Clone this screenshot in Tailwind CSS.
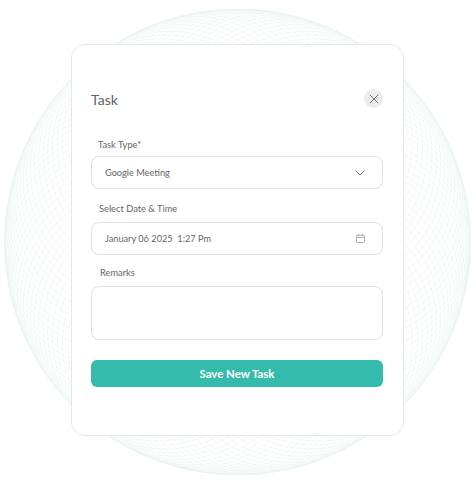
<!DOCTYPE html>
<html lang="en">
<head>
  <meta charset="UTF-8" />
  <title>Task</title>
  <script src="https://cdn.jsdelivr.net/npm/@tailwindcss/browser@4"></script>
</head>
<body class="bg-white w-[474px] h-[482px] overflow-hidden relative font-['Lato','Noto_Sans',sans-serif]">

<!-- guilloche ring behind the card -->
<svg id="rings" class="absolute left-[4px] top-[9px]" width="467" height="466" viewBox="0 0 467 466" fill="none" stroke="#d8ebe6" stroke-width="0.3"></svg>

<main class="relative ml-[71px] mt-[44px] w-[333px] h-[392px] bg-white border border-[#e6e8e8] rounded-[14px] pl-[19px] pr-[20px] pt-[43px]">
  <div class="flex justify-between items-start h-[48px]">
    <h1 class="text-[14px] leading-[24px] text-[#5f5f5f]">Task</h1>
    <button class="mt-[1px] w-[19px] h-[19px] rounded-full bg-[#ececec] flex items-center justify-center">
      <svg width="10" height="10" viewBox="0 0 10 10" stroke="#707070" stroke-width="1" fill="none"><path d="M0.8 0.8 9.2 9.2M9.2 0.8 0.8 9.2"/></svg>
    </button>
  </div>

  <label class="block pl-[7px] text-[9.3px] leading-[18px] h-[18px] text-[#666]">Task Type*</label>
  <div class="mt-[2px] h-[33px] border border-[#dfe1e1] rounded-[8px] flex items-center justify-between pl-[13px] pr-[17px] text-[9.2px] text-[#666]">
    <span>Google Meeting</span>
    <svg width="10" height="6" viewBox="0 0 10 6" stroke="#777" stroke-width="1" fill="none"><path d="M0.5 0.5 5 5 9.5 0.5"/></svg>
  </div>

  <label class="block mt-[11px] pl-[8px] text-[9.3px] leading-[18px] h-[18px] text-[#666]">Select Date &amp; Time</label>
  <div class="mt-[4px] h-[33px] border border-[#dfe1e1] rounded-[8px] flex items-center justify-between pl-[13px] pr-[17px] text-[9.2px] text-[#666]">
    <span class="whitespace-pre">January 06 2025  1:27 Pm</span>
    <svg width="9" height="9" viewBox="0 0 9 9" stroke="#999" stroke-width="0.8" fill="none"><rect x="0.5" y="1.2" width="8" height="7.3" rx="1"/><path d="M0.5 3.4H8.5M2.5 0.2V1.8M6.5 0.2V1.8"/></svg>
  </div>

  <label class="block mt-[9px] pl-[9px] text-[9.3px] leading-[18px] h-[18px] text-[#666]">Remarks</label>
  <textarea class="block mt-[4px] w-full h-[54px] border border-[#dfe1e1] rounded-[8px] resize-none"></textarea>

  <button class="block mt-[20px] w-full h-[27px] rounded-[6px] bg-[#35bbab] text-white text-[11.4px] font-bold">Save New Task</button>
</main>

<script>
  const rings = document.getElementById("rings");
  let out = "";
  for (let i = 0; i < 120; i++) {
    const a = i * Math.PI / 60;
    const cx = 233.5 + 116 * Math.cos(a);
    const cy = 233 + 116 * Math.sin(a);
    out += `<circle cx="${cx.toFixed(2)}" cy="${cy.toFixed(2)}" r="117"/>`;
  }
  rings.innerHTML = out;
</script>
</body>
</html>
